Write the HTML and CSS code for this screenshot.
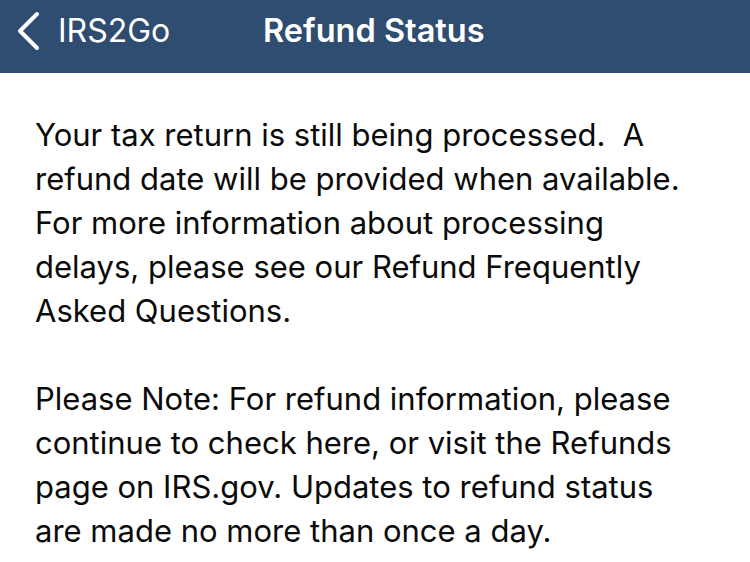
FILE: index.html
```html
<!DOCTYPE html>
<html>

<head>
	<title>Refund Status</title>
	<meta name="viewport" content="width=device-width, initial-scale=1">
	<link rel="stylesheet" href="styles.css">
</head>

<body>
	<div class="navbar">
		<a class="back" href="#">
			<svg class="chevron" width="26" height="40" viewBox="0 0 26 40">
				<polyline points="21,3 4,20 21,37" fill="none" stroke="#fff" stroke-width="4" stroke-linecap="round" stroke-linejoin="round" />
			</svg>
			<span>IRS2Go</span>
		</a>
		<h1 class="title">Refund Status</h1>
	</div>

	<div class="content">
		<p>Your tax return is still being processed.&nbsp; A<br>
			refund date will be provided when available.<br>
			For more information about processing<br>
			delays, please see our Refund Frequently<br>
			Asked Questions.</p>
		<p>Please Note: For refund information, please<br>
			continue to check here, or visit the Refunds<br>
			page on IRS.gov. Updates to refund status<br>
			are made no more than once a day.</p>
	</div>
</body>

</html>
```

FILE: styles.css
```css
body {
	margin: 0;
	font-family: 'Inter', 'Liberation Sans', sans-serif;
	background-color: #fff;
	color: #0a0a0a;
}

.navbar {
	height: 73px;
	box-sizing: border-box;
	padding-bottom: 12px;
	background-color: #2f4c71;
	display: flex;
	align-items: center;
	color: #fff;
}

.back {
	display: flex;
	align-items: center;
	color: #fff;
	text-decoration: none;
	font-size: 32px;
	padding-left: 16px;
	width: 247px;
}

.chevron {
	margin-right: 16px;
}

.title {
	margin: 0;
	font-size: 32.5px;
	font-weight: 600;
}

.content {
	padding: 0 20px 0 35px;
}

.content p {
	margin: 40px 0 0 0;
	font-size: 31px;
	line-height: 44px;
}

.content p + p {
	margin-top: 44px;
}
```
